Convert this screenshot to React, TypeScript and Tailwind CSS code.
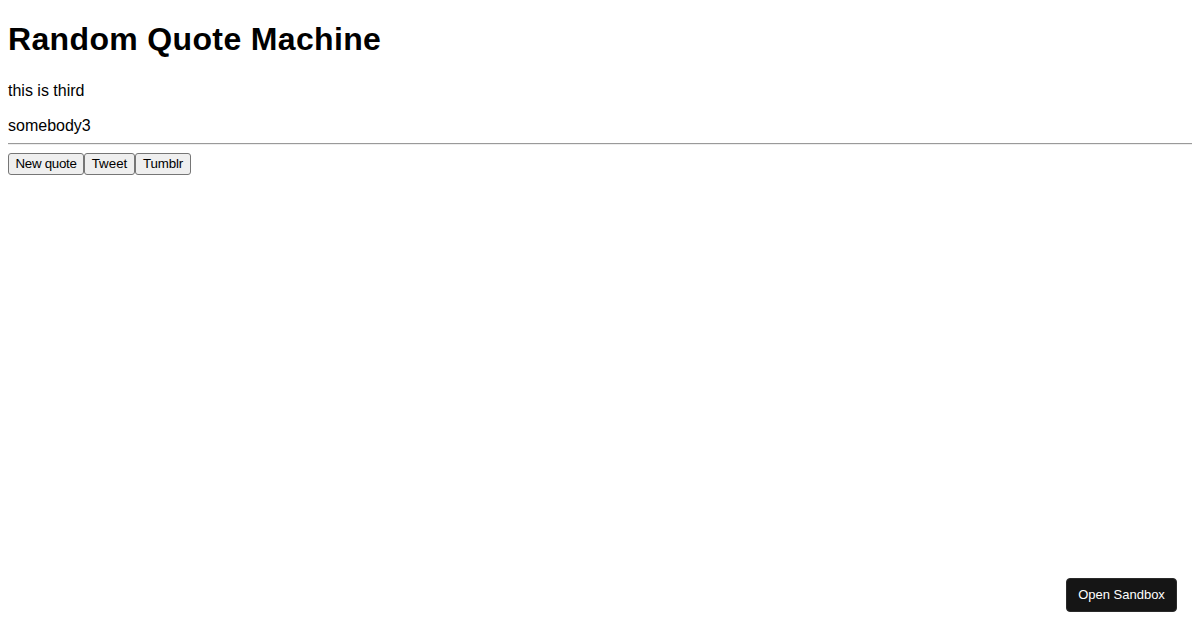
import React from "react";

export default function App() {
  return (
    <div className="min-h-[630px] bg-white text-black px-2 pt-[21.44px]" style={{ fontFamily: '"Liberation Sans", Arial, sans-serif' }}>
      <h1 className="text-[32px] font-bold leading-[normal] tracking-[0.35px]">Random Quote Machine</h1>
      <p className="mt-[23.5px] text-[16px] leading-[normal]">this is third</p>
      <p className="mt-[17px] text-[16px] leading-[normal]">somebody3</p>
      <hr className="mt-[8px] border-t border-b border-t-[#9a9a9a] border-b-[#eeeeee] h-0" />
      <div className="mt-[8px] flex">
        <button className="h-[22px] w-[76px] text-[13.33px] tracking-[-0.3px] leading-[normal] bg-[#efefef] border border-[#767676] rounded-[3px]">New quote</button>
        <button className="h-[22px] w-[51px] text-[13.33px] leading-[normal] bg-[#efefef] border border-[#767676] rounded-[3px]">Tweet</button>
        <button className="h-[22px] w-[56px] text-[13.33px] tracking-[-0.2px] leading-[normal] bg-[#efefef] border border-[#767676] rounded-[3px]">Tumblr</button>
      </div>
      <button className="fixed right-[23px] bottom-[18px] h-[34px] w-[111px] rounded-[4px] bg-[#151515] text-white text-[13px] border border-[#2a2a2a]">Open Sandbox</button>
    </div>
  );
}
